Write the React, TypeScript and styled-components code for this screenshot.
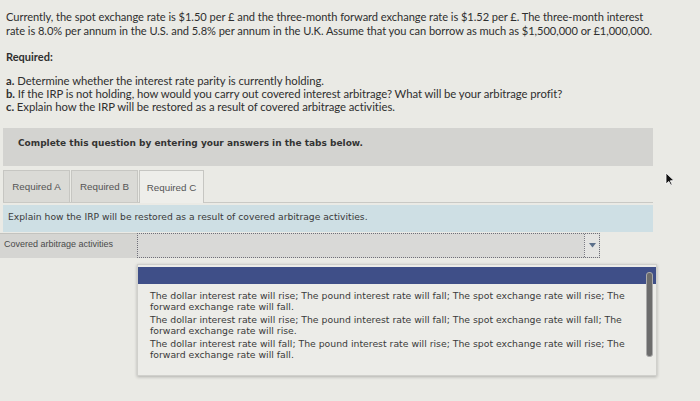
import styled, { createGlobalStyle } from 'styled-components';

const GlobalStyle = createGlobalStyle`
  html, body {
    margin: 0;
    padding: 0;
    background: #eaeae5;
  }
  body {
    font-family: Lato, "Open Sans", sans-serif;
    color: #2f2f2f;
  }
`;

const tabs = ['Required A', 'Required B', 'Required C'];

const options = [
  'The dollar interest rate will rise; The pound interest rate will fall; The spot exchange rate will rise; The forward exchange rate will fall.',
  'The dollar interest rate will rise; The pound interest rate will fall; The spot exchange rate will fall; The forward exchange rate will rise.',
  'The dollar interest rate will fall; The pound interest rate will rise; The spot exchange rate will rise; The forward exchange rate will fall.',
];

export default function App() {
  return (
    <Page>
      <GlobalStyle />
      <Intro>
        Currently, the spot exchange rate is $1.50 per £ and the three-month forward exchange rate is $1.52 per £. The three-month interest
        <br />
        rate is 8.0% per annum in the U.S. and 5.8% per annum in the U.K. Assume that you can borrow as much as $1,500,000 or £1,000,000.
      </Intro>
      <Required>Required:</Required>
      <Tasks>
        <li><b>a.</b> Determine whether the interest rate parity is currently holding.</li>
        <li><b>b.</b> If the IRP is not holding, how would you carry out covered interest arbitrage? What will be your arbitrage profit?</li>
        <li><b>c.</b> Explain how the IRP will be restored as a result of covered arbitrage activities.</li>
      </Tasks>

      <Banner>Complete this question by entering your answers in the tabs below.</Banner>

      <TabRow>
        {tabs.map((t, i) => (
          <Tab key={t} $active={i === 2}>{t}</Tab>
        ))}
      </TabRow>

      <Prompt>Explain how the IRP will be restored as a result of covered arbitrage activities.</Prompt>

      <AnswerRow>
        <Label>Covered arbitrage activities</Label>
        <Select>
          <Arrow>
            <svg width="7" height="5" viewBox="0 0 7 5">
              <path d="M0 0 L7 0 L3.5 4.5 Z" fill="#5b6f8a" />
            </svg>
          </Arrow>
        </Select>
      </AnswerRow>

      <Menu>
        <MenuHead />
        {options.map((o) => (
          <Option key={o}>{o}</Option>
        ))}
        <Scroll />
      </Menu>

      <Cursor width="10" height="14" viewBox="0 0 10 14">
        <path d="M1 1 L1 12 L3.8 9.4 L5.8 13.2 L7.2 12.5 L5.3 8.8 L9 8.6 Z" fill="#111" stroke="#fff" strokeWidth="0.8" />
      </Cursor>
    </Page>
  );
}

const Page = styled.div`
  position: relative;
  width: 700px;
  height: 401px;
  overflow: hidden;
  padding-top: 10px;
  box-sizing: border-box;
`;

const Intro = styled.p`
  margin: 0 0 0 6px;
  white-space: nowrap;
  font-size: 11.1px;
  line-height: 14px;
  letter-spacing: -0.05px;
`;

const Required = styled.div`
  margin: 12px 0 0 6px;
  font-size: 11px;
  line-height: 13px;
  font-weight: 700;
`;

const Tasks = styled.ul`
  list-style: none;
  margin: 11px 0 0 6px;
  padding: 0;
  font-size: 11.3px;
  line-height: 13px;
  letter-spacing: -0.05px;

  b {
    font-weight: 700;
  }
`;

const Banner = styled.div`
  margin: 15px 0 0 3px;
  width: 650px;
  height: 38px;
  box-sizing: border-box;
  background: #d3d3d0;
  padding: 9px 0 0 15px;
  font-family: "DejaVu Sans", Verdana, sans-serif;
  font-size: 9px;
  line-height: 12px;
  font-weight: 700;
  color: #333;
`;

const TabRow = styled.div`
  display: flex;
  margin: 4px 0 0 3px;
  width: 650px;
  border-bottom: 1px solid #c9c9c5;
`;

const Tab = styled.div<{ $active?: boolean }>`
  width: ${(p) => (p.$active ? '65px' : '67px')};
  height: ${(p) => (p.$active ? '33px' : '32px')};
  box-sizing: border-box;
  display: flex;
  align-items: center;
  justify-content: center;
  font-family: "Liberation Sans", Arial, sans-serif;
  font-size: 9.8px;
  color: #555;
  background: ${(p) => (p.$active ? '#eeeeea' : '#dadad6')};
  border: 1px solid #c6c6c2;
  border-bottom: none;
  margin-right: 1px;
  margin-bottom: ${(p) => (p.$active ? '-1px' : '0')};
`;

const Prompt = styled.div`
  margin: 2px 0 0 3px;
  width: 650px;
  height: 27px;
  box-sizing: border-box;
  background: #cedfe4;
  padding: 6px 0 0 5px;
  font-family: "DejaVu Sans", Verdana, sans-serif;
  font-size: 9.2px;
  line-height: 11px;
  color: #3a3a3a;
`;

const AnswerRow = styled.div`
  display: flex;
  margin-top: 1px;
  width: 600px;
  height: 25px;
`;

const Label = styled.div`
  width: 137px;
  background: #d5d5d2;
  font-family: "Liberation Sans", Arial, sans-serif;
  font-size: 9px;
  color: #4a4a4a;
  padding: 5px 0 0 4px;
  box-sizing: border-box;
  border-top: 1px solid #c3c3bf;
`;

const Select = styled.div`
  flex: 1;
  display: flex;
  justify-content: flex-end;
  background: #d9d9d7;
  border: 1px dotted #6f6f78;
  box-sizing: border-box;
`;

const Arrow = styled.div`
  width: 14px;
  display: flex;
  align-items: center;
  justify-content: center;
  background: #e4e4e2;
  border-left: 1px dotted #7a7a82;
`;

const Menu = styled.div`
  position: relative;
  margin: 6px 0 0 137px;
  width: 520px;
  height: 112px;
  box-sizing: border-box;
  background: #ecece8;
  border: 1px solid #d0d0cc;
  box-shadow: 0 1px 3px rgba(0, 0, 0, 0.25);
  padding-top: 2px;
`;

const MenuHead = styled.div`
  height: 17px;
  background: #3f4f88;
  margin-bottom: 6px;
`;

const Option = styled.div`
  padding: 0 20px 2px 12px;
  font-family: "DejaVu Sans", Verdana, sans-serif;
  font-size: 9.3px;
  line-height: 11px;
  color: #3a3a3a;
`;

const Scroll = styled.div`
  position: absolute;
  top: 7px;
  right: 3px;
  width: 5px;
  height: 83px;
  border-radius: 3px;
  background: #6c6c6c;
  border: 1px solid #aaa;
`;

const Cursor = styled.svg`
  position: absolute;
  left: 665px;
  top: 172px;
`;
